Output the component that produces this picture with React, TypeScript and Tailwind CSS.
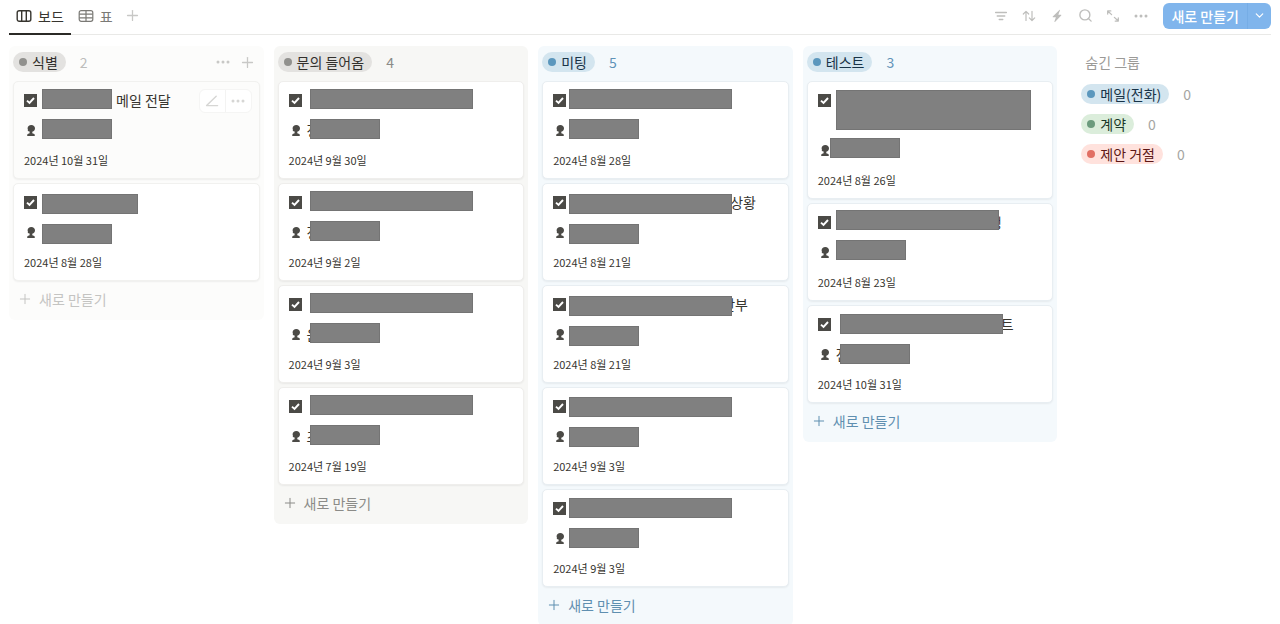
import { ChevronDown, Plus, Search } from "lucide-react";
import clsx from "clsx";

type Field = {
  mask: string;
  before?: string;
  after?: string;
  afterClass?: string;
};

type CardData = {
  title: Field;
  person: Field;
  date: string;
  tall?: boolean;
  hovered?: boolean;
};

type Tone = "faded" | "gray" | "blue" | "green" | "red";

type ColumnData = {
  name: string;
  tone: Tone;
  cards: CardData[];
};

const columns: ColumnData[] = [
  {
    name: "식별",
    tone: "faded",
    cards: [
      {
        title: { mask: "-mt-px ml-1 w-[70px]", after: "메일 전달", afterClass: "ml-1" },
        person: { mask: "-mt-px ml-1 w-[70px]" },
        date: "2024년 10월 31일",
        hovered: true,
      },
      {
        title: { mask: "mt-0.5 ml-1 w-24" },
        person: { mask: "mt-0.5 ml-1 w-[70px]" },
        date: "2024년 8월 28일",
      },
    ],
  },
  {
    name: "문의 들어옴",
    tone: "gray",
    cards: [
      {
        title: { mask: "-mt-px ml-[7px] w-[163px]" },
        person: { mask: "-mt-px ml-[7px] w-[70px]", before: "정" },
        date: "2024년 9월 30일",
      },
      {
        title: { mask: "-mt-px ml-[7px] w-[163px]" },
        person: { mask: "-mt-px ml-[7px] w-[70px]", before: "정" },
        date: "2024년 9월 2일",
      },
      {
        title: { mask: "-mt-px ml-[7px] w-[163px]" },
        person: { mask: "-mt-px ml-[7px] w-[70px]", before: "윤" },
        date: "2024년 9월 3일",
      },
      {
        title: { mask: "-mt-px ml-[7px] w-[163px]" },
        person: { mask: "-mt-px ml-[7px] w-[70px]", before: "조" },
        date: "2024년 7월 19일",
      },
    ],
  },
  {
    name: "미팅",
    tone: "blue",
    cards: [
      {
        title: { mask: "-mt-px ml-0.5 w-[163px]" },
        person: { mask: "-mt-px ml-0.5 w-[70px]" },
        date: "2024년 8월 28일",
      },
      {
        title: { mask: "mt-0.5 ml-0.5 w-[163px]", after: "상황", afterClass: "-ml-0.5" },
        person: { mask: "mt-0.5 ml-0.5 w-[70px]" },
        date: "2024년 8월 21일",
      },
      {
        title: { mask: "mt-0.5 ml-0.5 w-[163px]", after: "안부", afterClass: "-ml-2.5" },
        person: { mask: "mt-0.5 ml-0.5 w-[70px]" },
        date: "2024년 8월 21일",
      },
      {
        title: { mask: "mt-px ml-0.5 w-[163px]" },
        person: { mask: "mt-px ml-0.5 w-[70px]" },
        date: "2024년 9월 3일",
      },
      {
        title: { mask: "ml-0.5 w-[163px]" },
        person: { mask: "ml-0.5 w-[70px]" },
        date: "2024년 9월 3일",
      },
    ],
  },
  {
    name: "테스트",
    tone: "blue",
    cards: [
      {
        title: { mask: "ml-1 w-[195px]" },
        person: { mask: "-mt-0.5 -ml-0.5 w-[70px]" },
        date: "2024년 8월 26일",
        tall: true,
      },
      {
        title: { mask: "-mt-0.5 ml-1 w-[163px]", after: "행", afterClass: "-ml-2.5" },
        person: { mask: "-mt-0.5 ml-1 w-[70px]" },
        date: "2024년 8월 23일",
      },
      {
        title: { mask: "ml-2 w-[163px]", after: "트", afterClass: "-ml-0.5" },
        person: { mask: "ml-2 w-[70px]", before: "전" },
        date: "2024년 10월 31일",
      },
    ],
  },
];

const hiddenGroups: { name: string; tone: Tone }[] = [
  { name: "메일(전화)", tone: "blue" },
  { name: "계약", tone: "green" },
  { name: "제안 거절", tone: "red" },
];

const tones: Record<
  Tone,
  { pill: string; dot: string; column: string; count: string; add: string; border: string }
> = {
  faded: {
    pill: "bg-[#e3e2e0] text-[#32302c]",
    dot: "bg-[#91918e]",
    column: "bg-[#fcfcfb]",
    count: "text-[#bdbdbb]",
    add: "text-[#c4c4c2]",
    border: "border-[#f1f1ef]",
  },
  gray: {
    pill: "bg-[#e3e2e0] text-[#32302c]",
    dot: "bg-[#91918e]",
    column: "bg-[#f7f7f5]",
    count: "text-[#8b8b88]",
    add: "text-[#8b8b88]",
    border: "border-[#efeeec]",
  },
  blue: {
    pill: "bg-[#d3e5ef] text-[#183347]",
    dot: "bg-[#5b97bd]",
    column: "bg-[#f4f9fc]",
    count: "text-[#5f93b8]",
    add: "text-[#5f8fb0]",
    border: "border-[#e8eef2]",
  },
  green: {
    pill: "bg-[#dbeddb] text-[#1c3829]",
    dot: "bg-[#6c9b7d]",
    column: "",
    count: "",
    add: "",
    border: "",
  },
  red: {
    pill: "bg-[#ffe2dd] text-[#5d1715]",
    dot: "bg-[#e16f64]",
    column: "",
    count: "",
    add: "",
    border: "",
  },
};

function BoardIcon() {
  return (
    <svg width="16" height="16" viewBox="0 0 16 16" fill="none" stroke="currentColor" strokeWidth="1.4">
      <rect x="1.2" y="2.7" width="13.6" height="10.6" rx="2" />
      <path d="M5.7 2.7v10.6M10.3 2.7v10.6" />
    </svg>
  );
}

function TableIcon() {
  return (
    <svg width="16" height="16" viewBox="0 0 16 16" fill="none" stroke="currentColor" strokeWidth="1.2">
      <rect x="1.2" y="2.7" width="13.6" height="10.6" rx="2" />
      <path d="M1.2 6.2h13.6M1.2 9.8h13.6M8 2.7v10.6" />
    </svg>
  );
}

function FilterIcon() {
  return (
    <svg width="14" height="14" viewBox="0 0 14 14" fill="none" stroke="currentColor" strokeWidth="1.3" strokeLinecap="round">
      <path d="M1.600 3.500h10.800M3.200 7h7.600M5.200 10.500h3.600" />
    </svg>
  );
}

function SortIcon() {
  return (
    <svg width="14" height="14" viewBox="0 0 14 14" fill="none" stroke="currentColor" strokeWidth="1.2" strokeLinecap="round" strokeLinejoin="round">
      <path d="M4 11.500V2.300M1.300 5 4 2.300 6.700 5M10 2.300v9.200M7.300 8.800 10 11.500l2.700-2.700" />
    </svg>
  );
}

function BoltIcon() {
  return (
    <svg width="14" height="14" viewBox="0 0 14 14" fill="currentColor">
      <path d="M9.4.9 2.8 7.6c-.3.3-.1.7.3.7h2.8l-1.5 4.3c-.1.4.3.7.6.4l6.2-6.6c.3-.3.1-.7-.3-.7H8.3L10 1.3c.2-.4-.3-.7-.6-.4Z" />
    </svg>
  );
}

function ExpandIcon() {
  return (
    <svg width="14" height="14" viewBox="0 0 14 14" fill="none" stroke="currentColor" strokeWidth="1.3" strokeLinecap="round" strokeLinejoin="round">
      <path d="M1.7 5V1.9h3.1M2 2.2l3.6 3.4M12.3 9v3.1H9.2M12 11.8 8.4 8.4" />
    </svg>
  );
}

function PersonIcon() {
  return (
    <svg width="14" height="14" viewBox="0 0 14 14" fill="#4b4a46" aria-hidden>
      <path d="M7.300 2c2.200 0 3.700 1.400 3.700 3.300 0 1.700-1 3-2.700 3.400v1.500l2 .9c.4.200.5.900.5 2H3.200c0-1.100.1-1.800.5-2l1.900-.9V8.400L3.700 8.100l.3-1.200c-.3-.5-.4-1-.4-1.600C3.600 3.400 5.100 2 7.300 2Z" />
    </svg>
  );
}

function Dots() {
  return (
    <svg width="16" height="16" viewBox="0 0 16 16" fill="currentColor">
      <circle cx="3" cy="8" r="1.5" />
      <circle cx="8" cy="8" r="1.5" />
      <circle cx="13" cy="8" r="1.5" />
    </svg>
  );
}

function Pill({ name, tone }: { name: string; tone: Tone }) {
  return (
    <span className={clsx("flex h-5 items-center gap-[5px] rounded-full pr-2 pl-1.5", tones[tone].pill)}>
      <span className={clsx("size-2 rounded-full", tones[tone].dot)} />
      <span className="whitespace-nowrap">{name}</span>
    </span>
  );
}

function MaskedText({ field, tall }: { field: Field; tall?: boolean }) {
  return (
    <>
      {field.before && <span className="absolute left-[18px]">{field.before}</span>}
      <span
        className={clsx(
          "relative z-10 shrink-0 border border-[#747474] bg-[#808080]",
          tall ? "h-10" : "h-5",
          field.mask,
        )}
      />
      {field.after && (
        <span className={clsx("whitespace-nowrap", field.afterClass)}>{field.after}</span>
      )}
    </>
  );
}

function Card({ card, tone }: { card: CardData; tone: Tone }) {
  return (
    <article
      className={clsx(
        "relative flex flex-col gap-2.5 rounded-[5px] border px-2.5 py-2 shadow-[0_1px_2px_rgba(15,15,15,0.06)]",
        card.hovered ? "bg-[#fcfcfb]" : "bg-white",
        tones[tone].border,
      )}
    >
      <div className={clsx("relative flex", card.tall ? "h-10" : "h-5")}>
        <span className="relative flex h-5 w-3.5 shrink-0 items-center">
          <input
            type="checkbox"
            defaultChecked
            aria-label={card.date}
            className="peer size-[13px] appearance-none border border-[#4b4a46] checked:bg-[#4b4a46]"
          />
          <svg
            width="13"
            height="13"
            viewBox="0 0 13 13"
            fill="none"
            stroke="white"
            strokeWidth="1.9"
            className="pointer-events-none absolute hidden peer-checked:block"
          >
            <path d="M3 6.600 5.500 9 10 4" />
          </svg>
        </span>
        <MaskedText field={card.title} tall={card.tall} />
      </div>
      <div className="relative flex h-5">
        <span className="flex h-5 w-3.5 shrink-0 items-center">
          <PersonIcon />
        </span>
        <MaskedText field={card.person} />
      </div>
      <time className="text-[11px] leading-5">{card.date}</time>

      {card.hovered && (
        <div className="absolute top-[7px] right-[7px] flex h-6 w-[53px] divide-x divide-[#f3f3f2] rounded-md border border-[#f5f5f4] bg-white text-[#d6d6d4]">
          <button type="button" aria-label="편집" className="flex flex-1 items-center justify-center">
            <svg width="14" height="14" viewBox="0 0 14 14" fill="none" stroke="currentColor" strokeWidth="1.4" strokeLinecap="round" strokeLinejoin="round">
              <path d="M11.200 2.200 1.600 11.600h11" />
            </svg>
          </button>
          <button type="button" aria-label="더 보기" className="flex flex-1 items-center justify-center">
            <Dots />
          </button>
        </div>
      )}
    </article>
  );
}

function Column({ column }: { column: ColumnData }) {
  const tone = tones[column.tone];
  return (
    <section className={clsx("rounded-md px-1", tone.column)}>
      <header className="flex h-[35px] items-center pb-[3px]">
        <Pill name={column.name} tone={column.tone} />
        <span className={clsx("ml-3.5", tone.count)}>{column.cards.length}</span>
        {column.tone === "faded" && (
          <div className="ml-auto flex items-center gap-2 pr-1 text-[#c8c8c6]">
            <button type="button" aria-label="그룹 메뉴">
              <Dots />
            </button>
            <button type="button" aria-label="카드 추가">
              <Plus size={17} strokeWidth={1.8} />
            </button>
          </div>
        )}
      </header>
      <div className="flex flex-col gap-1">
        {column.cards.map((card, i) => (
          <Card key={i} card={card} tone={column.tone} />
        ))}
      </div>
      <button type="button" className={clsx("flex h-[39px] items-center gap-1.5 pb-1 pl-1", tone.add)}>
        <Plus size={16} strokeWidth={1.5} />
        새로 만들기
      </button>
    </section>
  );
}

const tools = [
  { label: "필터", icon: <FilterIcon /> },
  { label: "정렬", icon: <SortIcon /> },
  { label: "자동화", icon: <BoltIcon /> },
  { label: "검색", icon: <Search size={15} strokeWidth={2.2} /> },
  { label: "펼치기", icon: <ExpandIcon /> },
  { label: "더 보기", icon: <Dots /> },
];

export default function App() {
  return (
    <div className="flex h-screen flex-col bg-white px-[9px] font-['Noto_Sans_CJK_KR',sans-serif] text-sm leading-5 text-[#37352f]">
      <nav className="flex h-[35px] shrink-0 items-center border-b border-[#e9e9e7]">
        <button
          type="button"
          className="-mb-px flex h-[35px] items-center gap-1.5 border-b-2 border-[#2b2a26] px-[7px] pb-0.5"
        >
          <BoardIcon />
          보드
        </button>
        <button type="button" className="flex h-full items-center gap-1.5 px-[7px] pb-[3px] text-[#7b7a76]">
          <TableIcon />표
        </button>
        <button type="button" aria-label="보기 추가" className="flex h-full items-center px-1 pb-[3px] text-[#c8c8c6]">
          <Plus size={17} strokeWidth={1.8} />
        </button>
        <div className="ml-auto flex items-center pb-[3px]">
          {tools.map((tool) => (
            <button
              key={tool.label}
              type="button"
              aria-label={tool.label}
              className="flex size-7 items-center justify-center text-[#bebebc]"
            >
              {tool.icon}
            </button>
          ))}
          <div className="ml-2 flex h-[26px] divide-x divide-[#76ade6] overflow-hidden rounded-md bg-[#80b5ec] text-white">
            <button type="button" className="px-2 font-medium">
              새로 만들기
            </button>
            <button type="button" aria-label="템플릿" className="flex w-[23px] items-center justify-center">
              <ChevronDown size={13} strokeWidth={2.2} />
            </button>
          </div>
        </div>
      </nav>

      <main className="grid min-h-0 flex-1 grid-cols-[5fr_5fr_5fr_5fr_4fr] items-start gap-2.5 overflow-y-auto pt-[11px] [scrollbar-width:none]">
        {columns.map((column) => (
          <Column key={column.name} column={column} />
        ))}
        <aside className="flex flex-col gap-2.5 pl-3.5">
          <h2 className="mt-1.5 mb-0.5 pl-1 text-[#9b9a97]">숨긴 그룹</h2>
          {hiddenGroups.map((group) => (
            <div key={group.name} className="flex items-center gap-3.5">
              <Pill name={group.name} tone={group.tone} />
              <span className="text-[#a5a5a2]">0</span>
            </div>
          ))}
        </aside>
      </main>
    </div>
  );
}
